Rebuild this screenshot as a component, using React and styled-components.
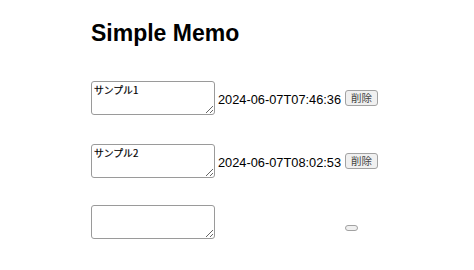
import React from "react";
import styled, { createGlobalStyle } from "styled-components";

const Global = createGlobalStyle`
  html, body { margin: 0; padding: 0; background: #fff; }
  body { font-family: "Liberation Sans", Arial, "Noto Sans CJK JP", sans-serif; color: #000; }
`;

const Page = styled.main`
  width: 292px;
  margin: 0 auto;
  padding-top: 20px;
`;

const Title = styled.h1`
  margin: 0 0 35px;
  font-size: 23px;
  font-weight: 700;
  line-height: 26px;
`;

const List = styled.div`
  display: flex;
  flex-direction: column;
  gap: 29px;
`;

const Row = styled.div`
  display: flex;
  align-items: flex-start;
  gap: 3px;
  margin-top: ${(p) => (p.$empty ? "-2px" : "0")};
`;

const Memo = styled.textarea`
  box-sizing: border-box;
  width: 124px;
  height: 34px;
  margin: 0;
  padding: 3px 2px;
  border: 1px solid #9a9a9a;
  border-radius: 3px;
  font-family: "Noto Sans CJK JP", sans-serif;
  font-size: 9.8px;
  line-height: 11px;
  color: #000;
  background: #fff;
  resize: both;
  outline: none;
  -webkit-text-stroke: 0.2px #000;
`;

const Stamp = styled.span`
  display: inline-block;
  width: 124px;
  margin-top: 11px;
  font-size: 12.8px;
  line-height: 15px;
  white-space: nowrap;
`;

const DeleteButton = styled.button`
  box-sizing: border-box;
  margin: ${(p) => (p.$empty ? "20px 0 0" : "9px 0 0")};
  padding: ${(p) => (p.$empty ? "0" : "0 5px")};
  width: ${(p) => (p.$empty ? "13px" : "auto")};
  height: ${(p) => (p.$empty ? "6px" : "16px")};
  border: 1px solid #a2a2a2;
  border-radius: 3px;
  background: #f0f0f0;
  color: #444;
  font-family: "Noto Sans CJK JP", sans-serif;
  font-size: 10.5px;
  line-height: 14px;
`;

const memos = [
  { text: "サンプル1", date: "2024-06-07T07:46:36" },
  { text: "サンプル2", date: "2024-06-07T08:02:53" },
  { text: "", date: "" },
];

export default function App() {
  return (
    <>
      <Global />
      <Page>
        <Title>Simple Memo</Title>
        <List>
          {memos.map((m, i) => (
            <Row key={i} $empty={!m.date}>
              <Memo defaultValue={m.text} />
              <Stamp>{m.date}</Stamp>
              <DeleteButton $empty={!m.date}>{m.date ? "削除" : ""}</DeleteButton>
            </Row>
          ))}
        </List>
      </Page>
    </>
  );
}
